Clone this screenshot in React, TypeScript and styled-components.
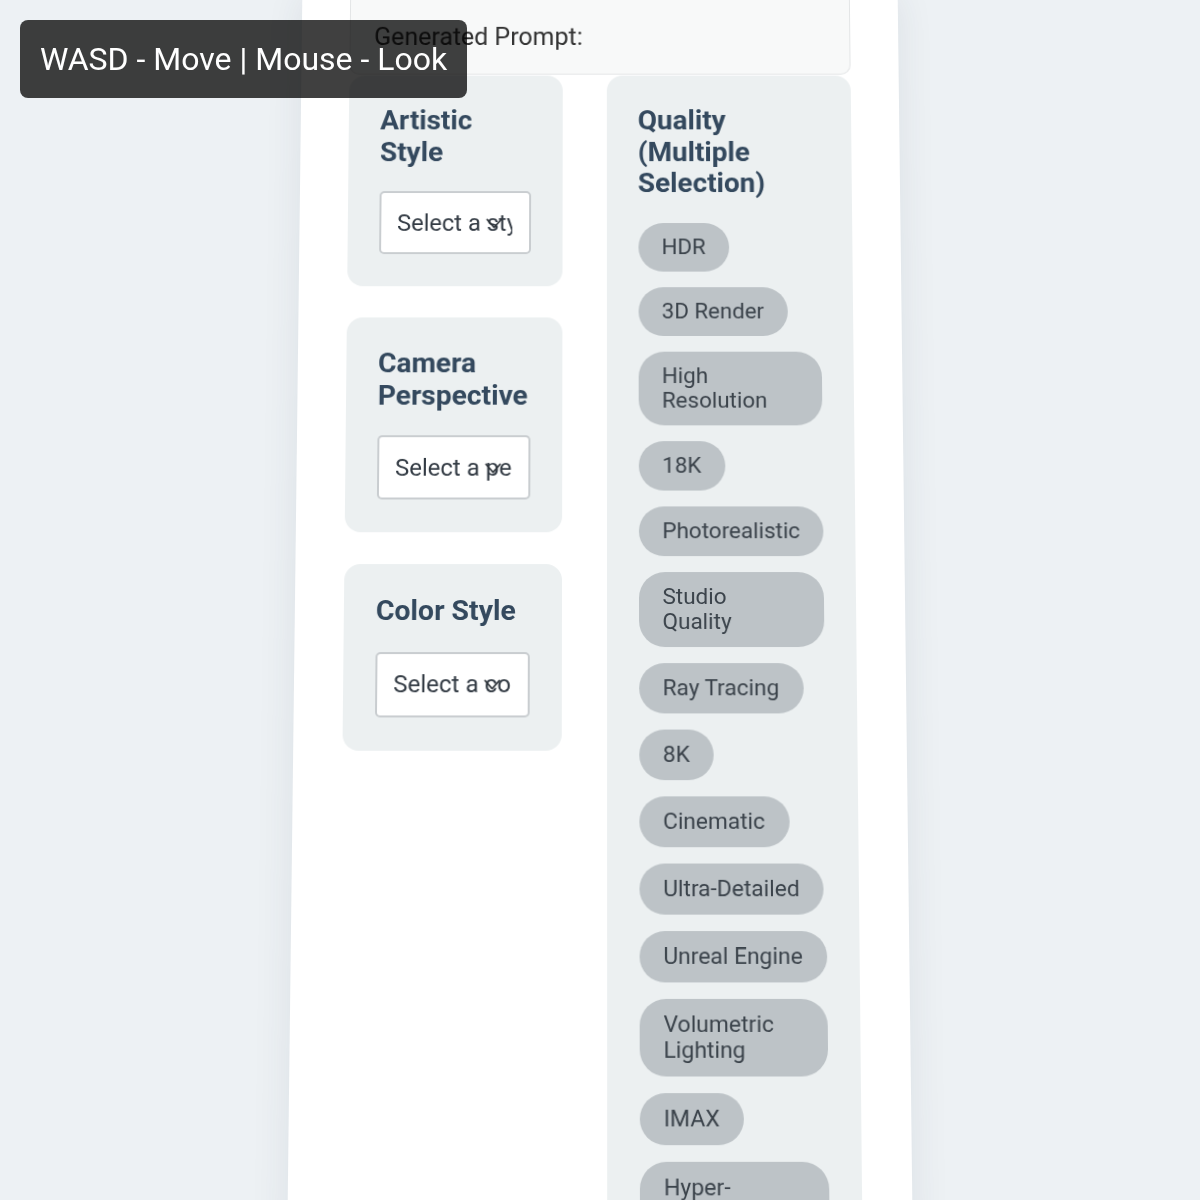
import React from "react";
import styled, { createGlobalStyle } from "styled-components";

const Global = createGlobalStyle`
  html {
    overflow: hidden;
    background: #edf1f4;
  }
  body {
    margin: 0;
    padding: 0;
    background: #edf1f4;
    font-family: Roboto, "Liberation Sans", Arial, sans-serif;
  }
  * { box-sizing: border-box; }
`;

const HelpTip = styled.div`
  position: fixed;
  top: 20px;
  left: 20px;
  z-index: 10;
  padding: 20px;
  border-radius: 8px;
  background: rgba(0, 0, 0, 0.75);
  color: #ffffff;
  font-family: Roboto, "Liberation Sans", sans-serif;
  font-size: 32px;
  line-height: normal;
  white-space: nowrap;
`;

const Stage = styled.div`
  height: 1200px;
  padding-top: 1px;
  transform-origin: 50% 600px;
  transform: perspective(1000px) rotateX(2.28deg);
`;

const Panel = styled.main`
  width: 610px;
  min-height: 1360px;
  margin: -21px auto 0;
  padding: 0 49px;
  background: #ffffff;
  box-shadow: 0 0 36px rgba(40, 60, 80, 0.09);
`;

const PromptBox = styled.div`
  padding: 28px 24px 24px;
  background: #f8f9f9;
  border: 1px solid #e3e5e6;
  border-top: none;
  border-radius: 0 0 10px 10px;
  color: #333333;
  font-size: 25.5px;
  line-height: 30px;
`;

const Columns = styled.div`
  display: grid;
  grid-template-columns: 218px 249.5px;
  column-gap: 44.5px;
  align-items: start;
  margin-top: 1px;
`;

const Stack = styled.div`
  display: flex;
  flex-direction: column;
  gap: 32px;
`;

const Card = styled.section`
  padding: 31px 32px 33px;
  background: #ecf0f1;
  border-radius: 16px;
`;

const Heading = styled.h3`
  margin: 0 0 24px;
  color: #34495e;
  font-size: 28.4px;
  font-weight: 700;
  line-height: 32.5px;
`;

const SelectWrap = styled.div`
  position: relative;
`;

const Select = styled.select`
  appearance: none;
  -webkit-appearance: none;
  display: block;
  width: 100%;
  height: 65px;
  padding: 0 17px 0 16px;
  background: #ffffff;
  border: 2px solid #c9cdd0;
  border-radius: 5px;
  color: #333b44;
  font-family: Roboto, "Liberation Sans", sans-serif;
  font-size: 24px;
  outline: none;
`;

const Chevron = styled.svg`
  position: absolute;
  right: 29px;
  top: 50%;
  width: 17px;
  height: 11px;
  margin-top: -5px;
  pointer-events: none;
`;

const ChipList = styled.div`
  display: flex;
  flex-direction: column;
  align-items: flex-start;
  gap: 16px;
`;

const Chip = styled.button`
  max-width: 100%;
  padding: 12.5px 24px;
  border: none;
  border-radius: 26px;
  background: #bdc3c7;
  color: #3b434b;
  font-family: Roboto, "Liberation Sans", sans-serif;
  font-size: 22.5px;
  line-height: 25px;
  text-align: left;
  cursor: pointer;
`;

const selects = [
  { title: "Artistic Style", placeholder: "Select a style" },
  { title: "Camera Perspective", placeholder: "Select a perspective" },
  { title: "Color Style", placeholder: "Select a color style" },
];

const qualities = [
  "HDR",
  "3D Render",
  "High Resolution",
  "18K",
  "Photorealistic",
  "Studio Quality",
  "Ray Tracing",
  "8K",
  "Cinematic",
  "Ultra-Detailed",
  "Unreal Engine",
  "Volumetric Lighting",
  "IMAX",
  "Hyper-Realistic",
];

function SelectCard({ title, placeholder }: { title: string; placeholder: string }) {
  return (
    <Card>
      <Heading>{title}</Heading>
      <SelectWrap>
        <Select defaultValue="">
          <option value="">{placeholder}</option>
        </Select>
        <Chevron viewBox="0 0 17 11" fill="none">
          <path d="M1.5 1.5 L8.5 9.5 L15.5 1.5" stroke="#2f353b" strokeWidth="1.8" strokeLinecap="round" strokeLinejoin="round" />
        </Chevron>
      </SelectWrap>
    </Card>
  );
}

export default function App() {
  return (
    <>
      <Global />
      <HelpTip>WASD - Move | Mouse - Look</HelpTip>
      <Stage>
        <Panel>
          <PromptBox>Generated Prompt:</PromptBox>
          <Columns>
            <Stack>
              {selects.map((s) => (
                <SelectCard key={s.title} title={s.title} placeholder={s.placeholder} />
              ))}
            </Stack>
            <Card>
              <Heading>Quality (Multiple Selection)</Heading>
              <ChipList>
                {qualities.map((q) => (
                  <Chip key={q} type="button">
                    {q}
                  </Chip>
                ))}
              </ChipList>
            </Card>
          </Columns>
        </Panel>
      </Stage>
    </>
  );
}
